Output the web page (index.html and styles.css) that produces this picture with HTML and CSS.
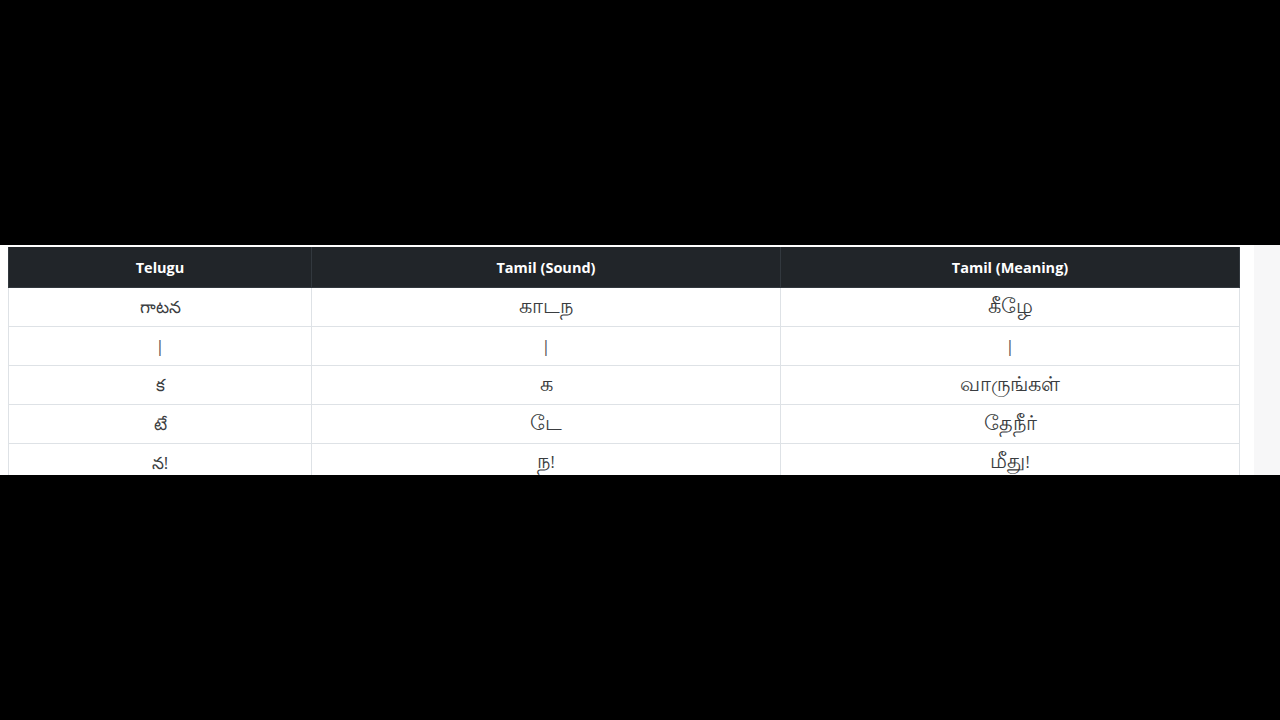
FILE: index.html
```html
<!DOCTYPE html>
<html>
<head>
<meta charset="utf-8">
<link rel="stylesheet" href="styles.css">
</head>
<body>
<div class="top-black"></div>
<div class="frame">
  <div class="content">
    <table class="words">
      <colgroup>
        <col class="c1"><col class="c2"><col class="c3">
      </colgroup>
      <thead>
        <tr><th>Telugu</th><th>Tamil (Sound)</th><th>Tamil (Meaning)</th></tr>
      </thead>
      <tbody>
        <tr><td>గాటన</td><td class="ta">காடந</td><td class="ta">கீழே</td></tr>
        <tr><td class="pipe">|</td><td class="pipe">|</td><td class="pipe">|</td></tr>
        <tr><td>క</td><td class="ta">க</td><td class="ta">வாருங்கள்</td></tr>
        <tr><td>టే</td><td class="ta">டே</td><td class="ta">தேநீர்</td></tr>
        <tr><td>న!</td><td class="ta">ந<span class="bang">!</span></td><td class="ta">மீது<span class="bang">!</span></td></tr>
      </tbody>
    </table>
  </div>
  <div class="scroll-track"></div>
</div>
<div class="bottom-black"></div>
</body>
</html>
```

FILE: styles.css
```css
html, body {
  margin: 0;
  padding: 0;
  background: #000;
  height: 720px;
  overflow: hidden;
}
.top-black {
  height: 245px;
}
.frame {
  height: 230px;
  background: #fff;
  display: flex;
  overflow: hidden;
}
.content {
  width: 1254px;
  padding: 2px 0 0 8px;
  box-sizing: border-box;
}
.scroll-track {
  flex: 1;
  background: #f7f7f8;
}
.words {
  width: 1231px;
  border-collapse: collapse;
  table-layout: fixed;
  font-family: "Open Sans", "Noto Sans", "DejaVu Sans", sans-serif;
  color: #3a3d40;
}
.c1 { width: 303px; }
.c2 { width: 469px; }
.c3 { width: 459px; }
.words th {
  background: #212529;
  color: #fff;
  font-size: 14.5px;
  font-weight: 700;
  height: 40px;
  padding: 1px 8px 0;
  border: 1px solid #32383e;
  border-top: none;
  text-align: center;
  box-sizing: border-box;
}
.words td {
  height: 39px;
  padding: 0 8px;
  border: 1px solid #dee2e6;
  text-align: center;
  font-size: 17px;
  line-height: 24px;
  font-weight: 400;
  box-sizing: border-box;
}
.words td.ta {
  font-size: 21px;
  padding-bottom: 3px;
}
.words td.pipe {
  color: #555;
}
.bang {
  font-size: 16px;
}
```
